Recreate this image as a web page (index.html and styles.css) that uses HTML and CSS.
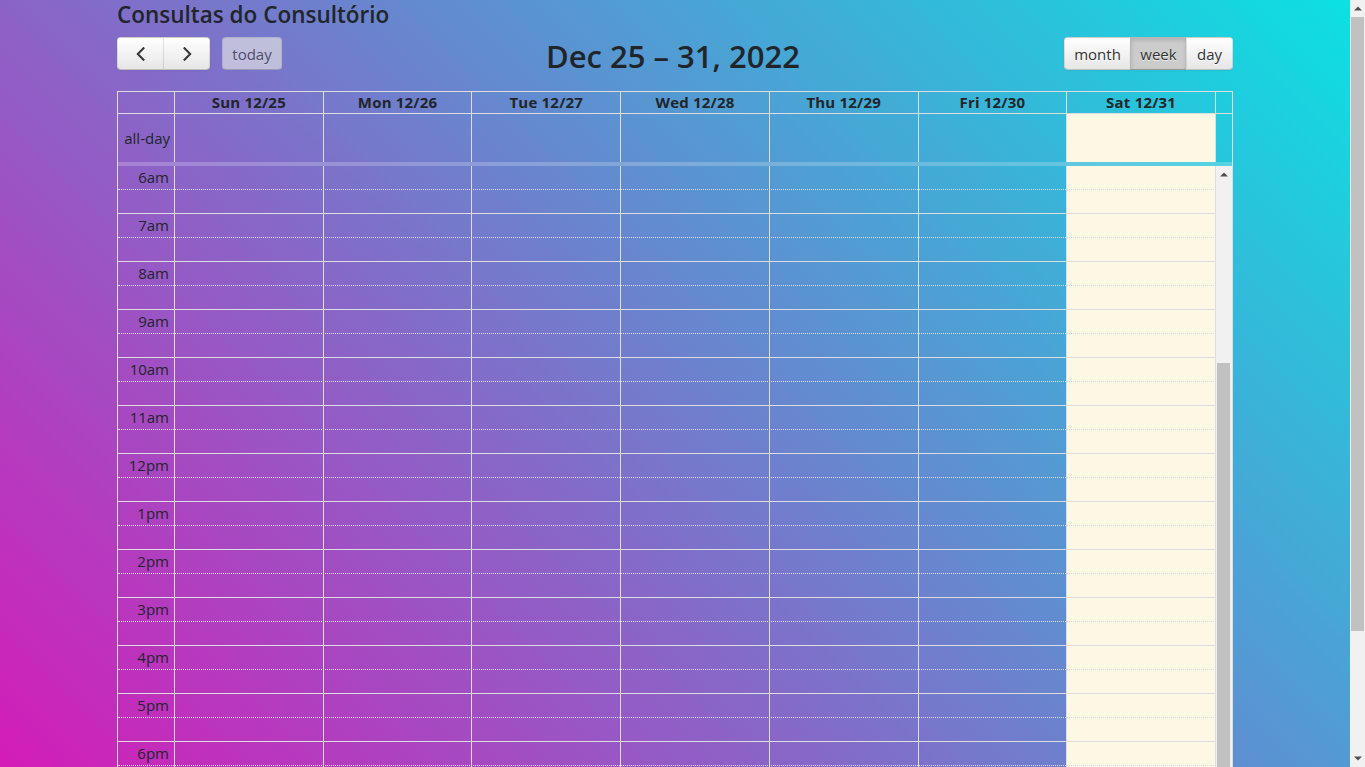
FILE: index.html
```html
<!DOCTYPE html>
<html lang="pt">
<head>
<meta charset="utf-8">
<title>Consultas do Consultório</title>
<link rel="stylesheet" href="styles.css">
</head>
<body>
<div class="viewport">
  <div class="page">
    <div class="container">
      <h4 class="page-title">Consultas do Consultório</h4>
      <div class="toolbar">
        <div class="tb-left">
          <div class="btn-group">
            <button class="btn btn-prev" type="button" aria-label="prev"><svg class="chev" width="10" height="14" viewBox="0 0 10 14"><polyline points="7.5,1.2 1.8,7 7.5,12.8" /></svg></button>
            <button class="btn btn-next" type="button" aria-label="next"><svg class="chev" width="10" height="14" viewBox="0 0 10 14"><polyline points="2.5,1.2 8.2,7 2.5,12.8" /></svg></button>
          </div>
          <button class="btn btn-today" type="button" disabled>today</button>
        </div>
        <div class="tb-center"><h2 class="range-title">Dec 25 – 31, 2022</h2></div>
        <div class="tb-right">
          <div class="btn-group">
            <button class="btn btn-month" type="button">month</button>
            <button class="btn btn-week active" type="button">week</button>
            <button class="btn btn-day" type="button">day</button>
          </div>
        </div>
      </div>

      <div class="cal">
        <div class="head-row">
          <div class="hcell axis"></div>
          <div class="hcell">Sun 12/25</div>
          <div class="hcell">Mon 12/26</div>
          <div class="hcell">Tue 12/27</div>
          <div class="hcell">Wed 12/28</div>
          <div class="hcell">Thu 12/29</div>
          <div class="hcell">Fri 12/30</div>
          <div class="hcell">Sat 12/31</div>
          <div class="gutter"></div>
        </div>
        <div class="allday-row">
          <div class="acell axis">all-day</div>
          <div class="acell"></div>
          <div class="acell"></div>
          <div class="acell"></div>
          <div class="acell"></div>
          <div class="acell"></div>
          <div class="acell"></div>
          <div class="acell today"></div>
          <div class="gutter"></div>
        </div>
        <div class="divider"></div>
        <div class="scroller">
          <div class="time-grid">
            <div class="bg-cols">
              <div class="bcell axis"></div>
              <div class="bcell"></div>
              <div class="bcell"></div>
              <div class="bcell"></div>
              <div class="bcell"></div>
              <div class="bcell"></div>
              <div class="bcell"></div>
              <div class="bcell today"></div>
            </div>
            <div class="slats">
              <div class="slat"><div class="slat-axis">6am</div></div><div class="slat half"></div>
              <div class="slat"><div class="slat-axis">7am</div></div><div class="slat half"></div>
              <div class="slat"><div class="slat-axis">8am</div></div><div class="slat half"></div>
              <div class="slat"><div class="slat-axis">9am</div></div><div class="slat half"></div>
              <div class="slat"><div class="slat-axis">10am</div></div><div class="slat half"></div>
              <div class="slat"><div class="slat-axis">11am</div></div><div class="slat half"></div>
              <div class="slat"><div class="slat-axis">12pm</div></div><div class="slat half"></div>
              <div class="slat"><div class="slat-axis">1pm</div></div><div class="slat half"></div>
              <div class="slat"><div class="slat-axis">2pm</div></div><div class="slat half"></div>
              <div class="slat"><div class="slat-axis">3pm</div></div><div class="slat half"></div>
              <div class="slat"><div class="slat-axis">4pm</div></div><div class="slat half"></div>
              <div class="slat"><div class="slat-axis">5pm</div></div><div class="slat half"></div>
              <div class="slat"><div class="slat-axis">6pm</div></div><div class="slat half"></div>
            </div>
          </div>
          <div class="vscroll inner-sb">
            <div class="sb-btn"><svg class="tri" width="8" height="5" viewBox="0 0 8 5"><polygon points="0,4.5 4,0.5 8,4.5" /></svg></div>
            <div class="sb-gap"></div>
            <div class="sb-thumb"></div>
          </div>
        </div>
      </div>
    </div>
  </div>
  <div class="page-sb">
    <div class="sb-btn"><svg class="tri" width="8" height="5" viewBox="0 0 8 5"><polygon points="0,4.5 4,0.5 8,4.5" /></svg></div>
    <div class="sb-thumb"></div>
    <div class="sb-rest"></div>
    <div class="sb-btn"><svg class="tri" width="8" height="5" viewBox="0 0 8 5"><polygon points="0,0.5 8,0.5 4,4.5" /></svg></div>
  </div>
</div>
</body>
</html>
```

FILE: styles.css
```css
html,
body {
  margin: 0;
  height: 100%;
}

body {
  font-family: "Open Sans", "Noto Sans", sans-serif;
  font-size: 15px;
  color: #212529;
  background: linear-gradient(45deg, #d41cb8 0%, #0ae2e2 100%) fixed;
}

.viewport {
  display: grid;
  grid-template-columns: minmax(0, 1fr) 15px;
  height: 767px;
  overflow: hidden;
}

.page {
  min-width: 0;
  overflow: hidden;
}

.container {
  width: 1116px;
  margin: 0 auto;
}

.page-title {
  margin: 0 0 8px;
  font-size: 22.5px;
  font-weight: 600;
  line-height: 29px;
}

.toolbar {
  display: flex;
  align-items: flex-start;
  height: 38px;
  margin-bottom: 16px;
}

.tb-left {
  display: flex;
  gap: 12px;
}

.tb-center {
  flex: 1;
  text-align: center;
}

.range-title {
  margin: 0;
  font-size: 31px;
  font-weight: 600;
  line-height: 38px;
}

.btn-group {
  display: flex;
}

.btn {
  box-sizing: border-box;
  height: 33px;
  margin: 0;
  padding: 0;
  display: flex;
  align-items: center;
  justify-content: center;
  font-family: "Open Sans", "Noto Sans", sans-serif;
  font-size: 15px;
  color: #333;
  border: 1px solid;
  border-color: rgba(0, 0, 0, 0.1) rgba(0, 0, 0, 0.1) rgba(0, 0, 0, 0.25);
  background: #f5f5f5 linear-gradient(to bottom, #ffffff, #e6e6e6);
  text-shadow: 0 1px 1px rgba(255, 255, 255, 0.75);
  box-shadow: inset 0 1px 0 rgba(255, 255, 255, 0.2), 0 1px 2px rgba(0, 0, 0, 0.05);
  border-radius: 0;
  cursor: pointer;
}

.btn-group .btn + .btn {
  margin-left: -1px;
}

.btn-group .btn:first-child {
  border-radius: 4px 0 0 4px;
}

.btn-group .btn:last-child {
  border-radius: 0 4px 4px 0;
}

.btn-prev { width: 47px; }
.btn-next { width: 47px; }
.btn-month { width: 67px; }
.btn-week { width: 57px; }
.btn-day { width: 47px; }

.btn-today {
  width: 60px;
  border-radius: 4px;
  background: #e6e6e6;
  opacity: 0.65;
  box-shadow: none;
  cursor: default;
}

.btn.active {
  background: #cccccc;
  box-shadow: inset 0 2px 4px rgba(0, 0, 0, 0.15), 0 1px 2px rgba(0, 0, 0, 0.05);
}

.chev polyline {
  fill: none;
  stroke: #333;
  stroke-width: 2;
  stroke-linecap: square;
  stroke-linejoin: miter;
}

/* calendar */
.cal {
  border: 1px solid #ddd;
}

.head-row,
.allday-row {
  display: grid;
  grid-template-columns: 57px repeat(7, minmax(0, 1fr)) 16px;
  box-sizing: border-box;
}

.head-row {
  height: 22px;
  border-bottom: 1px solid #ddd;
}

.hcell {
  border-right: 1px solid #ddd;
  display: flex;
  align-items: center;
  justify-content: center;
  font-weight: 700;
  font-size: 15px;
  letter-spacing: 0.2px;
  line-height: 21px;
}

.allday-row {
  height: 48px;
}

.acell {
  border-right: 1px solid #ddd;
}

.acell.axis {
  display: flex;
  align-items: center;
  justify-content: flex-end;
  padding-right: 4px;
  font-size: 15px;
}

.today {
  background: #fcf8e3;
}

.divider {
  height: 4px;
  background: rgba(255, 255, 255, 0.22);
}

.scroller {
  display: flex;
}

.time-grid {
  flex: 1;
  min-width: 0;
  display: grid;
}

.bg-cols,
.slats {
  grid-area: 1 / 1;
}

.bg-cols {
  display: grid;
  grid-template-columns: 57px repeat(7, minmax(0, 1fr));
}

.bcell {
  border-right: 1px solid #ddd;
}

.slat {
  box-sizing: border-box;
  height: 24px;
  border-bottom: 1px dotted #ddd;
}

.slat.half {
  border-bottom: 1px solid #ddd;
}

.slat-axis {
  width: 57px;
  box-sizing: border-box;
  padding-right: 6px;
  text-align: right;
  font-size: 15px;
  line-height: 23px;
}

/* scrollbars */
.vscroll {
  display: flex;
  flex-direction: column;
  background: #f1f1f1;
}

.inner-sb {
  width: 16px;
}

.page-sb {
  display: grid;
  grid-template-rows: 17px 614px minmax(0, 1fr) 17px;
  height: 767px;
  background: #f1f1f1;
}

.sb-btn {
  height: 17px;
  flex: none;
  display: flex;
  align-items: center;
  justify-content: center;
}

.tri {
  display: block;
}

.tri polygon {
  fill: #505050;
}

.inner-sb .sb-gap {
  height: 180px;
  flex: none;
}

.inner-sb .sb-thumb {
  flex: 1;
  margin: 0 2px 0 1px;
  background: #c1c1c1;
}

.page-sb .sb-thumb {
  margin: 0 1px;
  background: #c1c1c1;
}
```
